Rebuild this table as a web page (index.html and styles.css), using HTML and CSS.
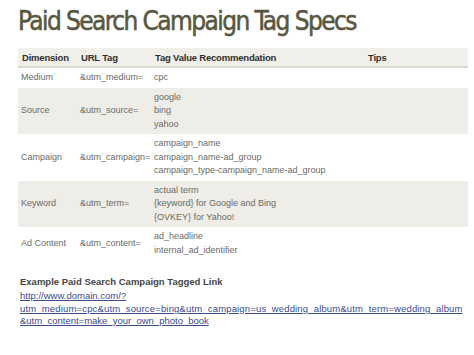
FILE: index.html
```html
<!DOCTYPE html>
<html>
<head>
<meta charset="utf-8">
<link rel="stylesheet" href="styles.css">
</head>
<body>
<div class="slide">
  <h1 class="title">Paid Search Campaign Tag Specs</h1>
  <table class="specs">
    <colgroup>
      <col class="c-dim"><col class="c-tag"><col class="c-val"><col class="c-tips">
    </colgroup>
    <thead>
      <tr><th>Dimension</th><th>URL Tag</th><th>Tag Value Recommendation</th><th class="tips">Tips</th></tr>
    </thead>
    <tbody>
      <tr><td>Medium</td><td>&amp;utm_medium=</td><td>cpc</td><td></td></tr>
      <tr class="alt"><td>Source</td><td>&amp;utm_source=</td><td>google<br>bing<br>yahoo</td><td></td></tr>
      <tr><td>Campaign</td><td>&amp;utm_campaign=</td><td>campaign_name<br>campaign_name-ad_group<br>campaign_type-campaign_name-ad_group</td><td></td></tr>
      <tr class="alt"><td>Keyword</td><td>&amp;utm_term=</td><td>actual term<br>{keyword} for Google and Bing<br>{OVKEY} for Yahoo!</td><td></td></tr>
      <tr><td>Ad Content</td><td>&amp;utm_content=</td><td>ad_headline<br>internal_ad_identifier</td><td></td></tr>
    </tbody>
  </table>
  <div class="example">
    <div class="ex-title">Example Paid Search Campaign Tagged Link</div>
    <div class="ex-link"><span class="l1">http://www.domain.com/?</span><br><span class="l2">utm_medium=cpc&amp;utm_source=bing&amp;utm_campaign=us_wedding_album&amp;utm_term=wedding_album</span><br><span class="l3">&amp;utm_content=make_your_own_photo_book</span></div>
  </div>
</div>
</body>
</html>
```
FILE: styles.css
```css
html, body {
  margin: 0;
  padding: 0;
  background: #ffffff;
}
.slide {
  width: 474px;
  height: 355px;
  overflow: hidden;
  padding: 0 0 0 18px;
  box-sizing: border-box;
}
.title {
  margin: 0;
  padding-top: 5px;
  height: 43px;
  box-sizing: border-box;
  font-family: "DejaVu Sans Condensed", "DejaVu Sans", sans-serif;
  font-weight: normal;
  font-size: 26px;
  line-height: 32px;
  letter-spacing: -1.6px;
  color: #58573f;
  -webkit-text-stroke: 0.5px #58573f;
  white-space: nowrap;
}
.specs {
  margin-top: 5px;
  width: 450px;
  border-collapse: collapse;
  table-layout: fixed;
  font-family: "Liberation Sans", Arial, sans-serif;
}
.c-dim { width: 59px; }
.c-tag { width: 74px; }
.c-val { width: 214px; }
.c-tips { width: 103px; }
.specs th {
  background: #f1efea;
  height: 18px;
  padding: 0 0 0 4px;
  text-align: left;
  font-size: 9.5px;
  font-weight: bold;
  color: #2f2f2f;
  border-bottom: 2px solid #d9d7d1;
  letter-spacing: -0.2px;
}
.specs th.tips { padding-left: 3px; }
.specs td {
  padding: 3px 0 3px 3px;
  font-size: 9px;
  line-height: 13.5px;
  color: #6a6a66;
  vertical-align: middle;
  white-space: nowrap;
}
.specs tr.alt td { background: #efede7; }
.example {
  margin-top: 15px;
  padding-left: 2px;
  font-family: "Liberation Sans", Arial, sans-serif;
}
.ex-title {
  font-size: 9.5px;
  font-weight: bold;
  color: #454545;
  line-height: 14px;
}
.ex-link {
  margin-top: 1px;
  font-size: 9.5px;
  line-height: 12.5px;
  color: #3b4b8c;
  text-decoration: underline;
  white-space: nowrap;
}
.l2 { letter-spacing: 0.16px; }
```
